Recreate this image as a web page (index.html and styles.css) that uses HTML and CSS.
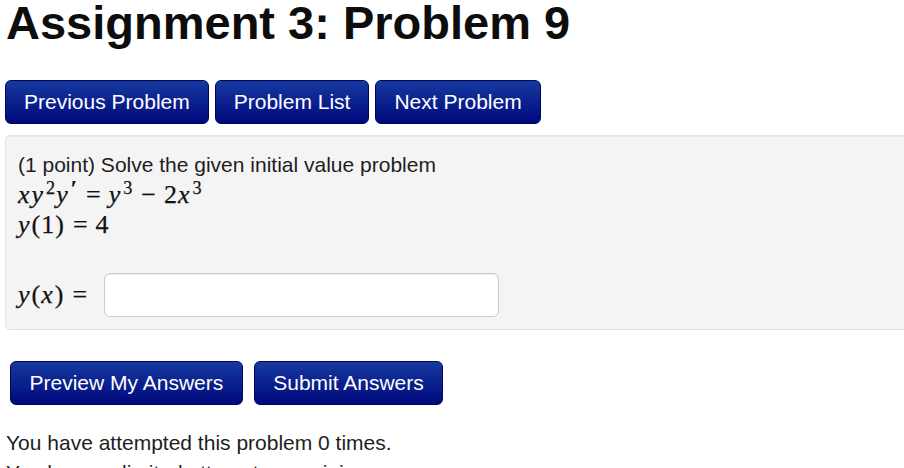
FILE: index.html
```html
<!DOCTYPE html>
<html>
<head>
<meta charset="utf-8">
<title>Assignment 3: Problem 9</title>
<link rel="stylesheet" href="styles.css">
</head>
<body>
<h1 class="title">Assignment 3: Problem 9</h1>
<div class="nav">
  <a class="btn">Previous Problem</a>
  <a class="btn">Problem List</a>
  <a class="btn">Next Problem</a>
</div>
<div class="well">
  <div class="stmt">(1 point) Solve the given initial value problem</div>
  <div class="math-line"><span class="mi">x</span><span class="mi">y</span><sup class="sup">2</sup><span class="mi">y</span><span class="prime">′</span><span class="mo">=</span><span class="mi">y</span><sup class="sup">3</sup><span class="mo">−</span><span class="mn">2</span><span class="mi">x</span><sup class="sup">3</sup></div>
  <div class="math-line"><span class="mi">y</span><span class="mn">(1)</span><span class="mo">=</span><span class="mn">4</span></div>
  <div class="answer">
    <span class="math"><span class="mi">y</span><span class="mn">(</span><span class="mi">x</span><span class="mn">)</span><span class="mo">=</span></span>
    <input class="field" type="text">
  </div>
</div>
<div class="actions">
  <button class="btn" type="button">Preview My Answers</button>
  <button class="btn" type="button">Submit Answers</button>
</div>
<p class="info">You have attempted this problem 0 times.<br>You have unlimited attempts remaining.</p>
</body>
</html>
```

FILE: styles.css
```css
html, body {
  margin: 0;
  padding: 0;
  overflow: hidden;
  background: #ffffff;
}
body {
  font-family: "Liberation Sans", Arial, sans-serif;
  font-size: 21px;
  line-height: 30px;
  color: #1e1e1e;
}
.title {
  margin: -3px 0 0 0;
  padding-left: 6px;
  font-size: 47px;
  line-height: 52px;
  font-weight: bold;
  color: #0d0d0d;
}
.nav {
  display: flex;
  gap: 6px;
  margin-top: 31px;
  padding-left: 5px;
}
.btn {
  display: inline-block;
  box-sizing: border-box;
  height: 44px;
  padding: 6px 18px;
  font-family: "Liberation Sans", Arial, sans-serif;
  font-size: 21px;
  line-height: 30px;
  color: #ffffff;
  background: linear-gradient(to bottom, #163a9f 0%, #00087c 100%);
  border: 1px solid #00055a;
  border-radius: 6px;
  white-space: nowrap;
  cursor: pointer;
}
.well {
  margin: 11px -30px 0 5px;
  padding: 14px 12px 12px 12px;
  background: #f4f4f4;
  border: 1px solid #e3e3e3;
  border-radius: 5px;
  box-shadow: inset 0 1px 1px rgba(0, 0, 0, 0.05);
}
.stmt {
  line-height: 30px;
}
.math-line, .math {
  font-family: "Liberation Serif", "Times New Roman", serif;
  font-size: 26px;
  line-height: 30px;
  color: #111111;
  -webkit-text-stroke: 0.25px #111111;
}
.mi {
  font-style: italic;
  letter-spacing: 2px;
}
.mn {
  letter-spacing: 1px;
}
.mo {
  margin: 0 8px;
}
.prime {
  font-size: 0.85em;
  margin: 0 1px;
  vertical-align: 0.3em;
  line-height: 0;
  font-weight: bold;
}
.sup {
  font-size: 0.7em;
  line-height: 0;
  vertical-align: 0.5em;
  margin: 0 1px;
}
.answer {
  display: flex;
  align-items: center;
  margin-top: 33px;
  height: 44px;
}
.math {
  width: 86px;
  flex: none;
}
.field {
  box-sizing: border-box;
  width: 395px;
  height: 44px;
  margin: 0;
  background: #ffffff;
  border: 1px solid #cccccc;
  border-radius: 6px;
  box-shadow: inset 0 1px 1px rgba(0, 0, 0, 0.075);
}
.actions {
  display: flex;
  gap: 11px;
  margin-top: 31px;
  padding-left: 10px;
}
.actions .btn {
  padding: 6px 18.5px;
}
.info {
  margin: 23px 0 0 0;
  padding-left: 6px;
  line-height: 30px;
}
```
